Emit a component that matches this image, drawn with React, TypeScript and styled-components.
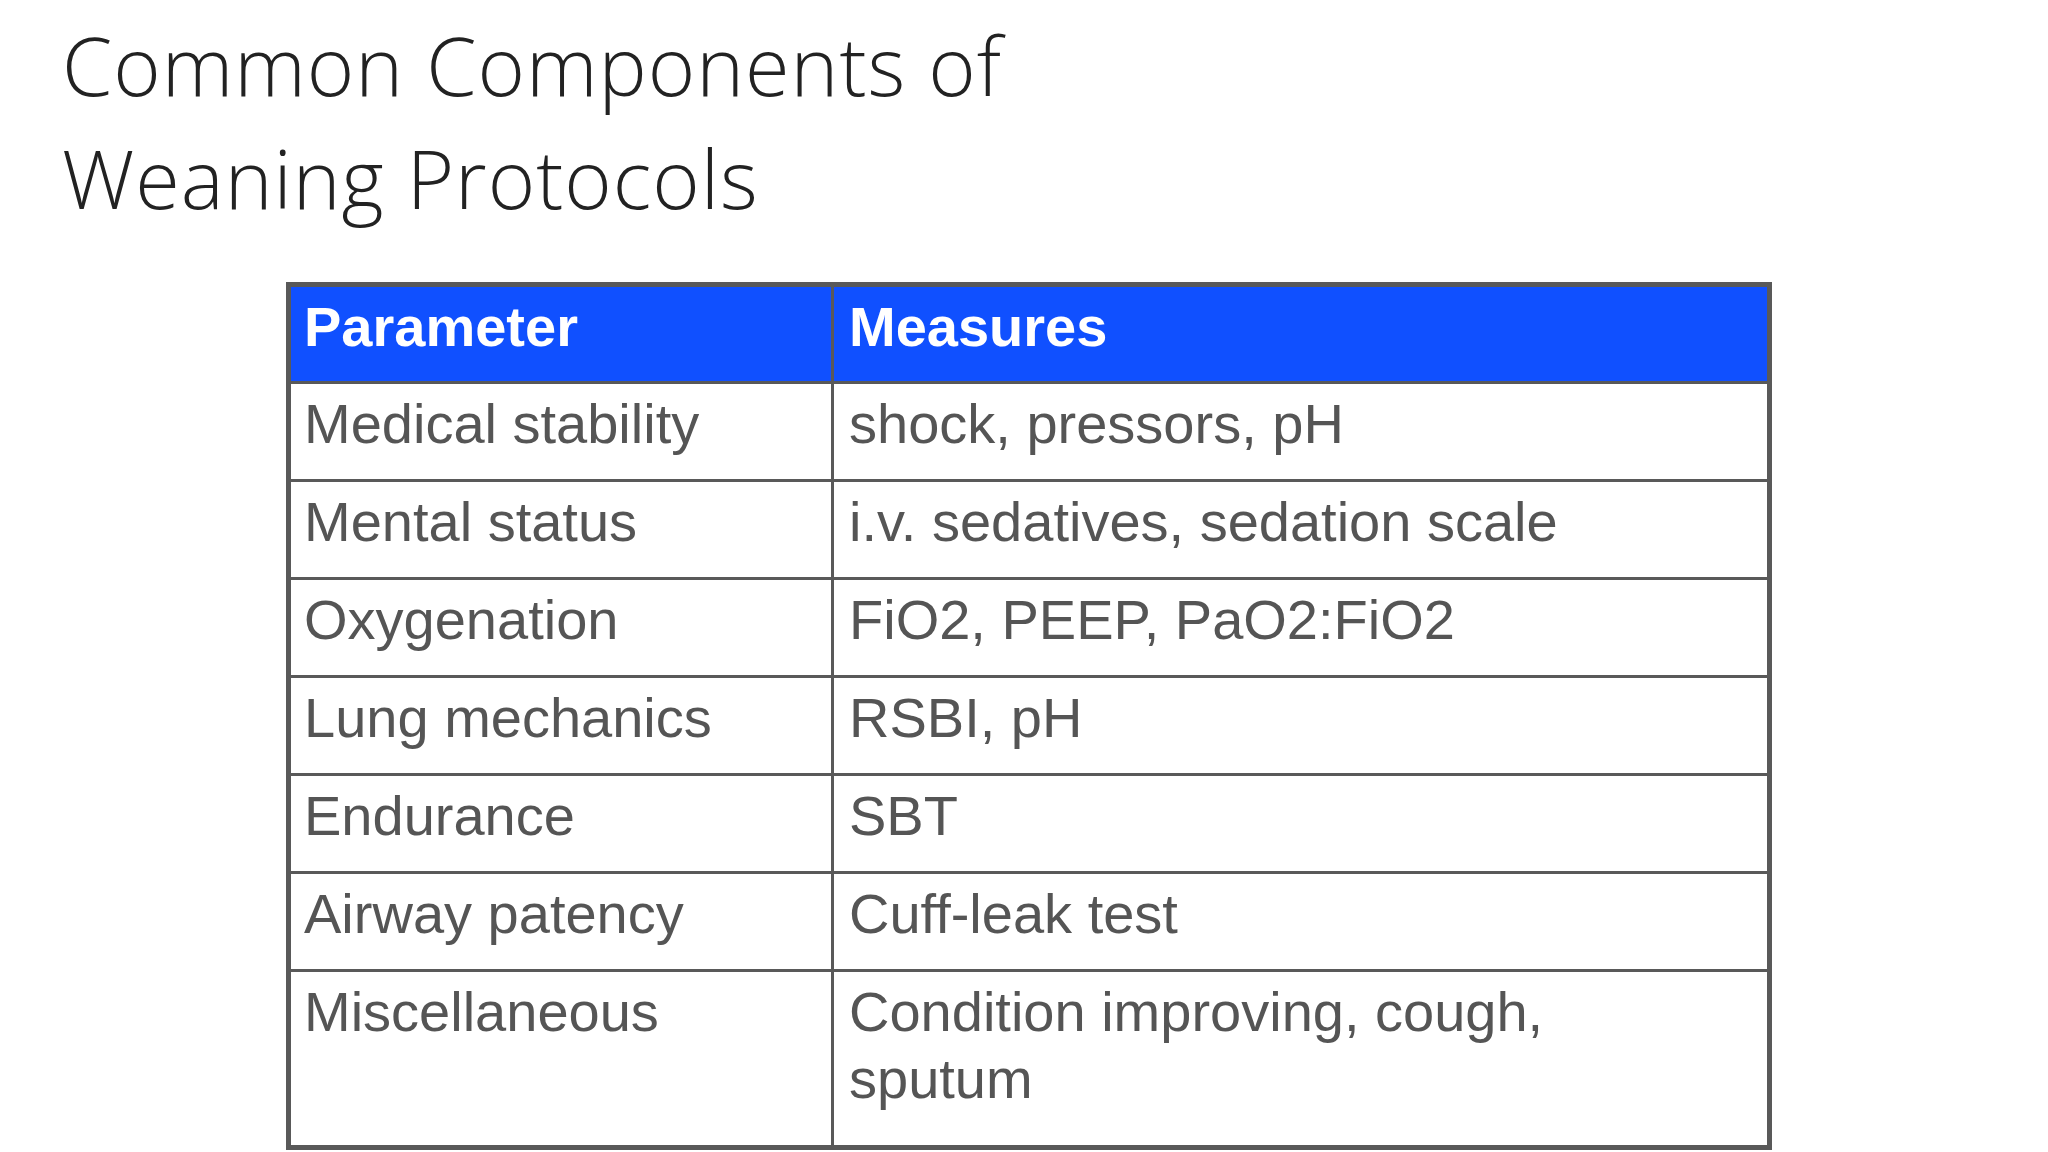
import React from "react";
import styled, { createGlobalStyle } from "styled-components";

const GlobalStyle = createGlobalStyle`
  html, body {
    margin: 0;
    padding: 0;
    background: #ffffff;
  }
  body {
    width: 2048px;
    height: 1152px;
    overflow: hidden;
  }
`;

const Slide = styled.div`
  width: 2048px;
  height: 1152px;
  box-sizing: border-box;
  padding-top: 8px;
  display: flex;
  flex-direction: column;
  background: #ffffff;
`;

const Title = styled.h1`
  margin: 0 0 0 62px;
  font-family: "Open Sans", "Noto Sans", sans-serif;
  font-weight: 300;
  font-size: 81px;
  letter-spacing: 1px;
  line-height: 113px;
  color: #222222;
`;

const Table = styled.div`
  margin: 48px 0 0 286px;
  width: 1486px;
  box-sizing: border-box;
  border: 5px solid #595959;
  display: grid;
  grid-template-columns: 543px 1fr;
  grid-template-rows: 94px repeat(6, 98px) 176px;
  font-family: "Liberation Sans", Arial, sans-serif;
  font-size: 56px;
  line-height: 67px;
`;

const Cell = styled.div<{ $head?: boolean; $first?: boolean; $wide?: boolean }>`
  box-sizing: border-box;
  padding: 6px ${(p) => (p.$wide ? "60px" : "13px")} 0 ${(p) => (p.$first ? "13px" : "15px")};
  border-top: ${(p) => (p.$head ? "none" : "3px solid #595959")};
  border-right: ${(p) => (p.$first ? "3px solid #595959" : "none")};
  background: ${(p) => (p.$head ? "#1050ff" : "#ffffff")};
  color: ${(p) => (p.$head ? "#ffffff" : "#555555")};
  font-weight: ${(p) => (p.$head ? 700 : 400)};
`;

const rows: [string, string][] = [
  ["Medical stability", "shock, pressors, pH"],
  ["Mental status", "i.v. sedatives, sedation scale"],
  ["Oxygenation", "FiO2, PEEP, PaO2:FiO2"],
  ["Lung mechanics", "RSBI, pH"],
  ["Endurance", "SBT"],
  ["Airway patency", "Cuff-leak test"],
  ["Miscellaneous", "Condition improving, cough, sputum"],
];

export default function App() {
  return (
    <>
      <GlobalStyle />
      <Slide>
        <Title>
          Common Components of
          <br />
          Weaning Protocols
        </Title>
        <Table>
          <Cell $head $first>
            Parameter
          </Cell>
          <Cell $head>Measures</Cell>
          {rows.map(([param, measure]) => (
            <React.Fragment key={param}>
              <Cell $first>{param}</Cell>
              <Cell $wide>{measure}</Cell>
            </React.Fragment>
          ))}
        </Table>
      </Slide>
    </>
  );
}
